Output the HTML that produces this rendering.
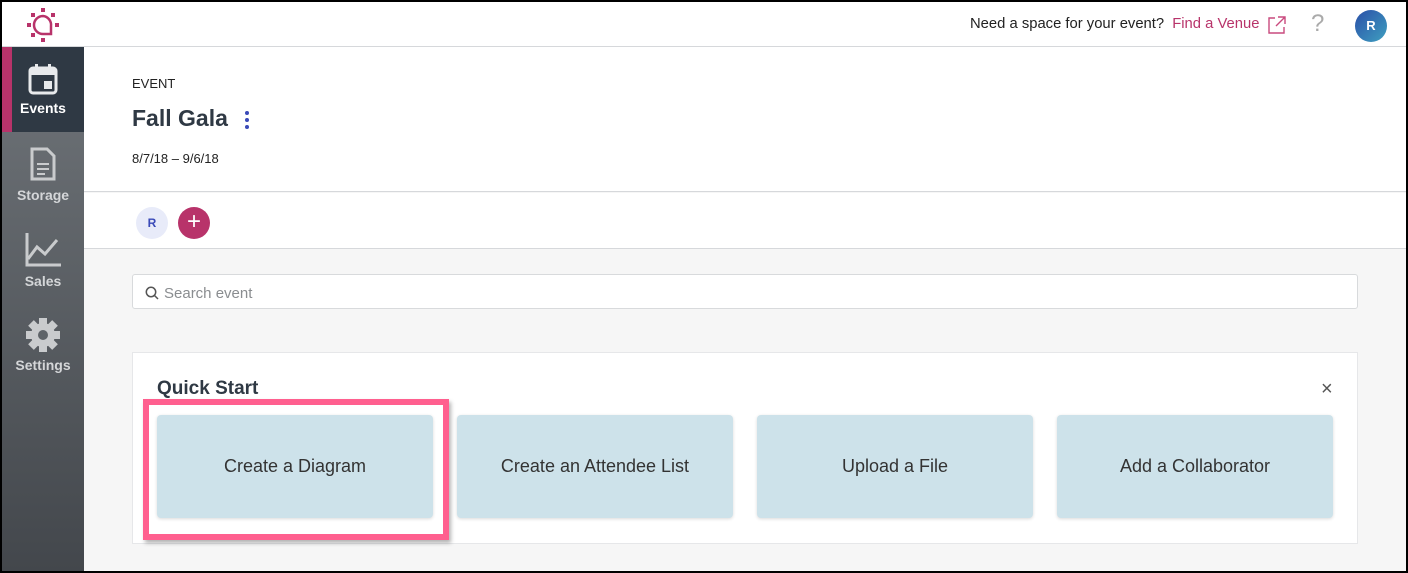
<!DOCTYPE html>
<html><head><meta charset="utf-8"><style>
*{box-sizing:border-box;margin:0;padding:0}
body{width:1408px;height:573px;background:#000;font-family:"Liberation Sans",sans-serif;position:relative;overflow:hidden}
.app{position:absolute;left:2px;top:2px;width:1404px;height:569px;background:#f6f6f6;overflow:hidden}
.hdr{position:absolute;left:0;top:0;width:1404px;height:45px;background:#fff;border-bottom:1px solid #d6d8db}
.side{position:absolute;left:0;top:45px;width:82px;height:524px;background:linear-gradient(#6f7479,#43474c)}
.nav{position:absolute;left:0;width:82px;text-align:center;color:#d4d6d8;font-size:14px;font-weight:bold}
.nav.act{background:#2f3944;color:#fff;border-left:10px solid #b8336a}
.main{position:absolute;left:82px;top:45px;width:1322px}
.abs{position:absolute}
.btn{position:absolute;top:413px;width:276px;height:103px;background:#cde2ea;border-radius:4px;box-shadow:0 1px 3px rgba(0,0,0,.15);font-size:18px;color:#333;display:flex;align-items:center;justify-content:center}
</style></head><body><div class="app">
<div class="hdr">
<svg class="abs" style="left:24px;top:6px" width="34" height="34" viewBox="0 0 34 34"><g fill="#b8336a"><rect x="15" y="0" width="4" height="4"/><rect x="15" y="30" width="4" height="4"/><rect x="1" y="15" width="4" height="4"/><rect x="29" y="15" width="4" height="4"/><rect x="5" y="5" width="4" height="4"/><rect x="25" y="5" width="4" height="4"/><rect x="5" y="25" width="4" height="4"/></g><path d="M17 8a9 9 0 1 0 0 18h8v-8a9 9 0 0 0-8-10z" fill="none" stroke="#b8336a" stroke-width="2.5"/></svg>
<div class="abs" style="left:968px;top:14px;font-size:14.8px;color:#222">Need a space for your event? <span style="color:#b8336a;margin-left:4px">Find a Venue</span></div>
<svg class="abs" style="left:1266px;top:14px" width="18" height="18" viewBox="0 0 18 18"><path d="M7 2H1v15h15v-6M10 1h7v7M17 1L8 10" fill="none" stroke="#c94a7e" stroke-width="1.4"/></svg>
<div class="abs" style="left:1309px;top:8px;font-size:24px;color:#aaa;font-weight:300">?</div>
<div class="abs" style="left:1353px;top:8px;width:32px;height:32px;border-radius:50%;background:linear-gradient(135deg,#2a4fa8,#3fa0c0);color:#fff;font-size:13px;font-weight:bold;text-align:center;line-height:32px">R</div>
</div>
<div class="side">
<div class="nav act" style="top:0;height:85px"><svg style="margin:16px 0 0 -10px" width="30" height="32" viewBox="0 0 30 32"><rect x="2" y="5" width="26" height="25" rx="3" fill="none" stroke="#e8eaec" stroke-width="3"/><rect x="2" y="5" width="26" height="7" fill="#e8eaec"/><rect x="7" y="1" width="3" height="6" fill="#e8eaec"/><rect x="20" y="1" width="3" height="6" fill="#e8eaec"/><rect x="16" y="18" width="8" height="8" fill="#e8eaec"/></svg><div style="margin:2px 0 0 -10px">Events</div></div>
<div class="nav" style="top:100px"><svg width="26" height="34" viewBox="0 0 26 34"><path d="M2 2h15l7 7v23H2z" fill="none" stroke="#c9cbcd" stroke-width="3"/><path d="M7 17h12M7 22h12M7 27h8" stroke="#c9cbcd" stroke-width="2"/></svg><div style="margin-top:3px">Storage</div></div>
<div class="nav" style="top:186px"><svg width="36" height="34" viewBox="0 0 36 34"><path d="M2 0v32h34M3 26l9-12 8 7 12-14" fill="none" stroke="#c9cbcd" stroke-width="3"/></svg><div style="margin-top:3px">Sales</div></div>
<div class="nav" style="top:270px"><svg width="36" height="36" viewBox="0 0 36 36"><g fill="#c9cbcd"><circle cx="18" cy="18" r="12"/><rect x="14" y="1" width="8" height="34"/><rect x="1" y="14" width="34" height="8"/><rect x="14" y="1" width="8" height="34" transform="rotate(45 18 18)"/><rect x="14" y="1" width="8" height="34" transform="rotate(-45 18 18)"/></g><circle cx="18" cy="18" r="5" fill="#5e6368"/></svg><div style="margin-top:1px">Settings</div></div>
</div>
<div class="main">
<div class="abs" style="left:0;top:0;width:1322px;height:145px;background:#fff;border-bottom:1px solid #d6d8db"></div>
<div class="abs" style="left:48px;top:29px;font-size:13px;color:#222">EVENT</div>
<div class="abs" style="left:48px;top:58px;font-size:23px;font-weight:bold;color:#2f3944">Fall Gala</div>
<svg class="abs" style="left:160px;top:63px" width="6" height="20"><g fill="#3a4ab8"><circle cx="3" cy="3" r="2"/><circle cx="3" cy="10" r="2"/><circle cx="3" cy="17" r="2"/></g></svg>
<div class="abs" style="left:48px;top:104px;font-size:13px;color:#222">8/7/18 – 9/6/18</div>
<div class="abs" style="left:0;top:146px;width:1322px;height:56px;background:#fff;border-bottom:1px solid #d6d8db"></div>
<div class="abs" style="left:52px;top:160px;width:32px;height:32px;border-radius:50%;background:#e8ebf9;color:#3a4ab8;font-size:12px;font-weight:bold;text-align:center;line-height:32px">R</div>
<div class="abs" style="left:94px;top:160px;width:32px;height:32px;border-radius:50%;background:#b8336a;color:#fff;font-size:24px;text-align:center;line-height:30px">+</div>
<div class="abs" style="left:48px;top:227px;width:1226px;height:35px;background:#fff;border:1px solid #d8dadc;border-radius:3px"></div>
<svg class="abs" style="left:61px;top:239px" width="14" height="14"><circle cx="6" cy="6" r="4.7" fill="none" stroke="#555" stroke-width="1.5"/><path d="M9.5 9.5L13 13" stroke="#555" stroke-width="1.5"/></svg>
<div class="abs" style="left:80px;top:238px;font-size:15px;color:#8a8d90">Search event</div>
<div class="abs" style="left:48px;top:305px;width:1226px;height:192px;background:#fff;border:1px solid #e6e7e9"></div>
<div class="abs" style="left:73px;top:331px;font-size:19px;font-weight:bold;color:#2f3944">Quick Start</div>
<div class="abs" style="left:1237px;top:331px;font-size:20px;color:#555">×</div>
</div>
<div class="abs" style="left:141px;top:397px;width:306px;height:141px;border:6px solid #ff5f8f;box-shadow:2px 3px 4px rgba(0,0,0,.3)"></div>
<div class="btn" style="left:155px">Create a Diagram</div>
<div class="btn" style="left:455px">Create an Attendee List</div>
<div class="btn" style="left:755px">Upload a File</div>
<div class="btn" style="left:1055px">Add a Collaborator</div>
</div></body></html>
